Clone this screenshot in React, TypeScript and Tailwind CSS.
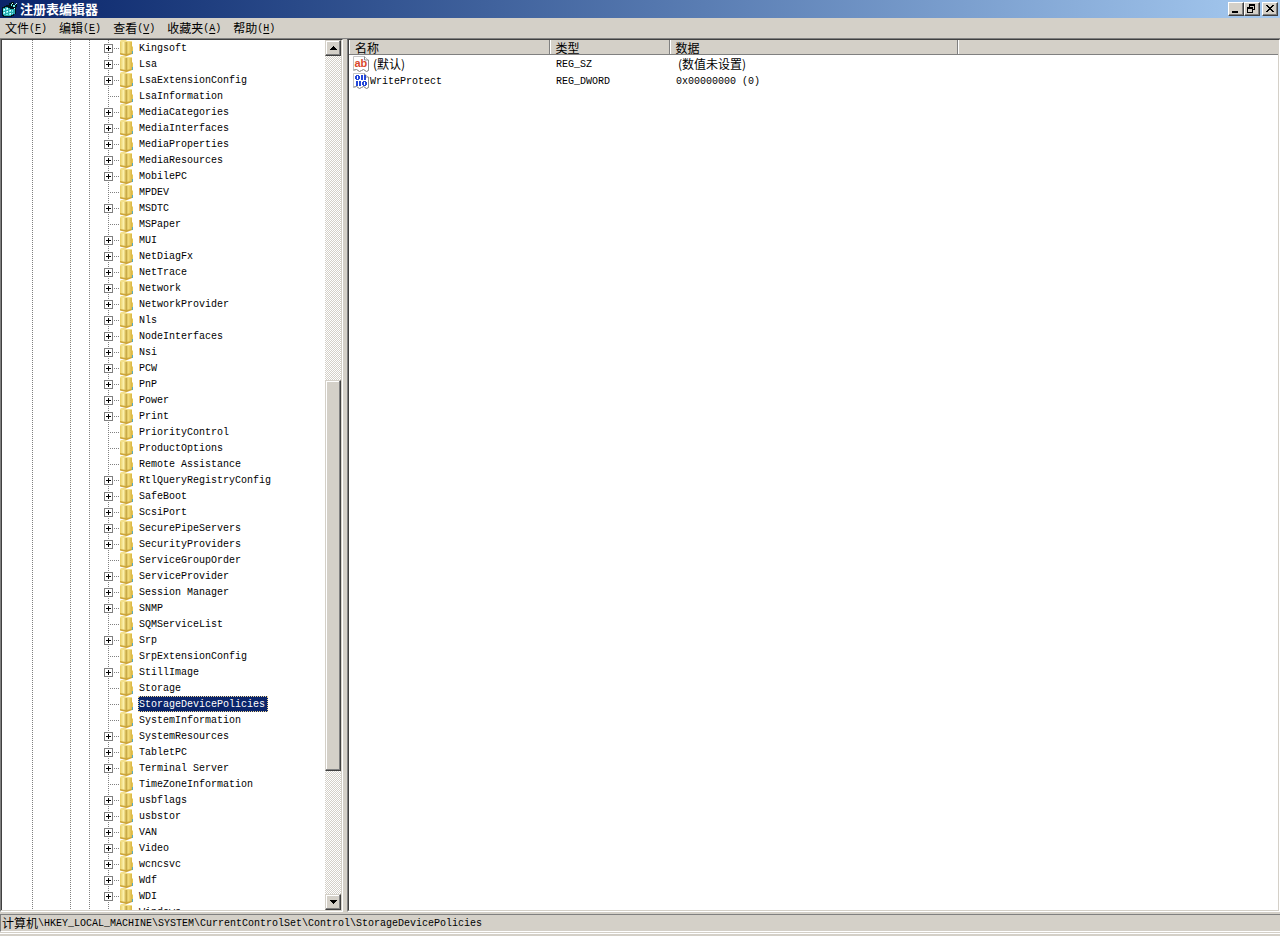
import React from "react";

const keys = `+Kingsoft
+Lsa
+LsaExtensionConfig
-LsaInformation
+MediaCategories
+MediaInterfaces
+MediaProperties
+MediaResources
+MobilePC
-MPDEV
+MSDTC
-MSPaper
+MUI
+NetDiagFx
+NetTrace
+Network
+NetworkProvider
+Nls
+NodeInterfaces
+Nsi
+PCW
+PnP
+Power
+Print
-PriorityControl
-ProductOptions
-Remote Assistance
+RtlQueryRegistryConfig
+SafeBoot
+ScsiPort
+SecurePipeServers
+SecurityProviders
-ServiceGroupOrder
+ServiceProvider
+Session Manager
+SNMP
-SQMServiceList
+Srp
-SrpExtensionConfig
+StillImage
-Storage
-StorageDevicePolicies
-SystemInformation
+SystemResources
+TabletPC
+Terminal Server
-TimeZoneInformation
+usbflags
+usbstor
+VAN
+Video
+wcncsvc
+Wdf
+WDI
-Windows`
  .split("\n")
  .map((line) => ({ name: line.slice(1), expandable: line[0] === "+" }));

const selected = "StorageDevicePolicies";

const menus = [
  ["文件", "F"],
  ["编辑", "E"],
  ["查看", "V"],
  ["收藏夹", "A"],
  ["帮助", "H"],
];

const caption =
  "flex shrink-0 items-center justify-center border border-t-white border-l-white border-r-[#404040] border-b-[#404040] bg-[#d4d0c8] shadow-[inset_-1px_-1px_0_#808080]";

const raised =
  "flex shrink-0 items-center justify-center border border-t-[#d4d0c8] border-l-[#d4d0c8] border-r-[#404040] border-b-[#404040] bg-[#d4d0c8] shadow-[inset_-1px_-1px_0_#808080,inset_1px_1px_0_#ffffff]";

const dottedLine =
  "bg-[repeating-linear-gradient(to_bottom,#808080_0px,#808080_1px,transparent_1px,transparent_2px)]";

const dottedRow =
  "bg-[repeating-linear-gradient(to_right,#808080_0px,#808080_1px,transparent_1px,transparent_2px)]";

function RegeditLogo() {
  return (
    <svg className="h-4 w-4 shrink-0" viewBox="0 0 16 16" shapeRendering="crispEdges" aria-hidden="true">
      <path d="M0 6h2V5h2V4h3V2h2V1h3v2h3v3h-1v7h-2v2h-2v1H1v-1H0z" fill="#00141c" />
      <path d="M1 7h2V6h3v1h2v1h4V7h1v6h-2v1H9v1H2v-1H1z" fill="#2aa9ad" />
      <path d="M1 8h2v2H1zM4 7h2v2H4zM4 10h2v2H4zM1 11h2v2H1zM7 9h2v2H7zM7 12h2v2H7zM4 13h2v1H4zM10 9h1v2h-1zM10 12h1v1h-1z" fill="#73f0f0" />
      <path d="M2 8h1v1H2zM5 7h1v1H5zM5 10h1v1H5zM2 11h1v1H2zM8 9h1v1H8zM8 12h1v1H8z" fill="#ffffff" />
      <path d="M9 3h1v2H9zM11 4h2v2h-2zM13 3h1v1h-1z" fill="#73f0f0" />
      <path d="M10 2h1v1h-1zM14 2h1v1h-1zM12 7h1v1h-1z" fill="#d8ffff" />
    </svg>
  );
}

function Folder() {
  return (
    <svg className="h-4 w-[14px] shrink-0" viewBox="0 0 14 16" aria-hidden="true">
      <defs>
        <linearGradient id="leaf" x1="0" x2="1">
          <stop offset="0" stopColor="#e6cb62" />
          <stop offset=".6" stopColor="#fdf2ae" />
          <stop offset="1" stopColor="#d0b048" />
        </linearGradient>
        <linearGradient id="cover" x1="0" x2="1">
          <stop offset="0" stopColor="#b99a38" />
          <stop offset=".35" stopColor="#f5df80" />
          <stop offset="1" stopColor="#d9b440" />
        </linearGradient>
      </defs>
      <path d="M0 1h6v14l-6-1z" fill="url(#leaf)" />
      <path d="M6 1h6v13l-5 1H6z" fill="url(#cover)" />
      <path d="M1 0h5l1 1h5v1H0V1z" fill="#f3e08c" />
      <path d="M12 6l1 1v7h-1z" fill="#e3c557" />
      <path d="M0 13l6 1 6-1v1l-5 2H6l-6-1.500z" fill="#cda63a" />
      <path d="M12 11h1v3h-1z" fill="#5aaabf" />
    </svg>
  );
}

function ValueIcon({ binary }: { binary?: boolean }) {
  return (
    <svg
      className="h-4 w-4 shrink-0 font-['Liberation_Sans',sans-serif] font-bold"
      viewBox="0 0 16 16"
      aria-hidden="true"
    >
      <path d="M.5 .5h11l4 4v10l-2 1-3-2-2 1-2 1-3-2-3 1z" fill="#fff" stroke="#c4c4c4" />
      <path d="M11.500 .5v3.500h4M15.500 4v10.500l-2 1-3-2-2 1-2 1-3-2-3 .5" fill="none" stroke="#8f8f8f" />
      {binary ? (
        <g fill="#2447d8" shapeRendering="crispEdges">
          <path fillRule="evenodd" d="M3 2h3v1h1v3H6v1H3V6H2V3h1zM4 3v3h1V3z" />
          <path d="M8 2h2v5H8zM11 2h2v5h-2zM3 8h2v5H3zM6 8h2v5H6z" />
          <path fillRule="evenodd" d="M10 8h3v1h1v3h-1v1h-3v-1H9V9h1zM11 9v3h1V9z" />
        </g>
      ) : (
        <text x="1.500" y="11" fontSize="11" fill="#d9472b">
          ab
        </text>
      )}
    </svg>
  );
}

function TreeRow({ name, expandable }: { name: string; expandable: boolean }) {
  const active = name === selected;
  return (
    <li className="flex h-4 shrink-0 items-center">
      <span className={"mr-[37px] ml-[30px] h-4 w-px " + dottedLine} />
      <span className={"mr-[18px] h-4 w-px " + dottedLine} />
      <span className={"mr-[14px] h-4 w-px " + dottedLine} />
      <span className="grid h-4 w-[9px] grid-cols-1 grid-rows-1 place-items-center">
        <span className={"col-start-1 row-start-1 h-4 w-px " + dottedLine} />
        {expandable ? (
          <button
            type="button"
            aria-label={"展开 " + name}
            className="col-start-1 row-start-1 flex h-[9px] w-[9px] items-center justify-center border border-[#808080] bg-white"
          >
            <svg className="h-[5px] w-[5px]" viewBox="0 0 5 5" shapeRendering="crispEdges">
              <path d="M0 2h5v1H0zM2 0h1v5H2z" />
            </svg>
          </button>
        ) : (
          <span className={"col-start-1 row-start-1 ml-[4px] h-px w-[5px] " + dottedRow} />
        )}
      </span>
      <span className={"mr-px ml-px h-px w-[5px] " + dottedRow} />
      <Folder />
      <span
        className={
          active
            ? "ml-1 h-4 border border-dotted border-[#f5db95] bg-[#0a246a] pr-[2px] leading-4 whitespace-pre text-white"
            : "ml-1 h-4 border border-transparent leading-4 whitespace-pre"
        }
      >
        {name}
      </span>
    </li>
  );
}

const cjk = "font-['Noto_Sans_CJK_SC',sans-serif] text-[12px]";

export default function App() {
  return (
    <div className="flex h-screen flex-col overflow-hidden bg-[#d4d0c8] font-['Liberation_Mono','Noto_Sans_CJK_SC',monospace] text-[10px] text-black">
      <header className="flex h-[18px] shrink-0 items-center bg-linear-to-r from-[#0a246a] to-[#a6caf0] px-[2px]">
        <RegeditLogo />
        <h1 className="ml-[2px] flex-1 font-['Noto_Sans_CJK_SC',sans-serif] text-[13px] leading-[18px] font-bold text-white">
          注册表编辑器
        </h1>
        <button type="button" aria-label="最小化" className={"h-[14px] w-4 " + caption}>
          <svg className="h-[10px] w-3" viewBox="0 0 12 10" shapeRendering="crispEdges">
            <path d="M2 7h6v2H2z" />
          </svg>
        </button>
        <button type="button" aria-label="还原" className={"h-[14px] w-4 " + caption}>
          <svg className="h-[10px] w-3" viewBox="0 0 12 10" shapeRendering="crispEdges">
            <path fillRule="evenodd" d="M3 0h6v6H7V5h1V2H4v1H3zM1 3h6v6H1zM2 5v3h4V5z" />
          </svg>
        </button>
        <button type="button" aria-label="关闭" className={"ml-[2px] h-[14px] w-4 " + caption}>
          <svg className="h-[10px] w-3" viewBox="0 0 12 10" shapeRendering="crispEdges">
            <path d="M2 1h2v1h1v1h2V2h1V1h2v1H9v1H8v1H7v1h1v1h1v1h1v1H8V7H7V6H5v1H4v1H2V7h1V6h1V5h1V4H4V3H3V2H2z" />
          </svg>
        </button>
      </header>

      <nav className="flex h-5 shrink-0 items-center gap-3 pl-[5px]">
        {menus.map(([label, key]) => (
          <button key={key} type="button" className="flex h-5 items-center leading-5">
            <span className={cjk}>{label}</span>
            <span className="pt-px">
              (<u className="underline-offset-2">{key}</u>)
            </span>
          </button>
        ))}
      </nav>

      <main className="flex min-h-0 flex-1 border-t border-[#808080]">
        <section className="flex w-[343px] shrink-0 border-t border-r border-b border-l border-t-[#404040] border-r-white border-b-white border-l-[#808080]">
          <ul className="mb-px flex min-w-0 flex-1 flex-col overflow-hidden border-l border-[#404040] bg-white">
            {keys.map((k) => (
              <TreeRow key={k.name} name={k.name} expandable={k.expandable} />
            ))}
          </ul>
          <div className="mr-px mb-px flex w-4 shrink-0 flex-col bg-[repeating-conic-gradient(#ffffff_0%_25%,#d4d0c8_0%_50%)] bg-[length:2px_2px]">
            <button type="button" aria-label="向上滚动" className={"h-4 w-4 " + raised}>
              <svg className="h-1 w-[7px]" viewBox="0 0 7 4" shapeRendering="crispEdges">
                <path d="M3 0h1v1h1v1h1v1h1v1H0V3h1V2h1V1h1z" />
              </svg>
            </button>
            <div className="flex-[325]" />
            <div className={"w-4 flex-[390] " + raised} />
            <div className="flex-[123]" />
            <button type="button" aria-label="向下滚动" className={"h-4 w-4 " + raised}>
              <svg className="h-1 w-[7px]" viewBox="0 0 7 4" shapeRendering="crispEdges">
                <path d="M0 0h7v1H6v1H5v1H4v1H3V3H2V2H1V1H0z" />
              </svg>
            </button>
          </div>
        </section>

        <section className="ml-1 min-w-0 flex-1 border-t border-r border-b border-l border-t-[#404040] border-r-white border-b-white border-l-[#808080]">
          <div className="h-full overflow-hidden border-r border-b border-l border-r-[#d4d0c8] border-b-[#d4d0c8] border-l-[#404040] bg-white">
            <table className="w-full table-fixed border-collapse text-left">
              <colgroup>
                <col className="w-[200px]" />
                <col className="w-[120px]" />
                <col className="w-[288px]" />
                <col />
              </colgroup>
              <thead>
                <tr className={"h-[15px] bg-[#d4d0c8] " + cjk}>
                  {["名称", "类型", "数据", ""].map((h) => (
                    <th
                      key={h}
                      className="h-[15px] border-r border-[#808080] p-0 font-normal shadow-[inset_0_-1px_0_#808080,inset_1px_0_0_#ffffff] last:border-r-0"
                    >
                      <div className="h-[15px] overflow-hidden pl-[6px] leading-[16px]">{h}</div>
                    </th>
                  ))}
                </tr>
              </thead>
              <tbody>
                <tr className="h-[17px]">
                  <td className="p-0">
                    <div className="flex h-[17px] items-center pl-[4px]">
                      <ValueIcon />
                      <span className={"ml-1 leading-4 " + cjk}>(默认)</span>
                    </div>
                  </td>
                  <td className="p-0 pt-[2px] pl-[7px]">REG_SZ</td>
                  <td className={"p-0 pl-[9px] leading-4 " + cjk}>(数值未设置)</td>
                  <td className="p-0" />
                </tr>
                <tr className="h-[17px]">
                  <td className="p-0">
                    <div className="flex h-[17px] items-center pl-[4px]">
                      <ValueIcon binary />
                      <span className="ml-px pt-[2px]">WriteProtect</span>
                    </div>
                  </td>
                  <td className="p-0 pt-[2px] pl-[7px]">REG_DWORD</td>
                  <td className="p-0 pt-[2px] pl-[7px]">0x00000000 (0)</td>
                  <td className="p-0" />
                </tr>
              </tbody>
            </table>
          </div>
        </section>
      </main>

      <footer className="mt-[2px] shrink-0 pb-[2px]">
        <div className="flex h-[18px] items-center border-t border-b border-l border-t-[#808080] border-b-white border-l-[#808080] pl-px leading-4">
          <span className={cjk}>计算机</span>
          <span className="pt-px">\HKEY_LOCAL_MACHINE\SYSTEM\CurrentControlSet\Control\StorageDevicePolicies</span>
        </div>
        <div className="mt-px h-px bg-white" />
      </footer>
    </div>
  );
}
